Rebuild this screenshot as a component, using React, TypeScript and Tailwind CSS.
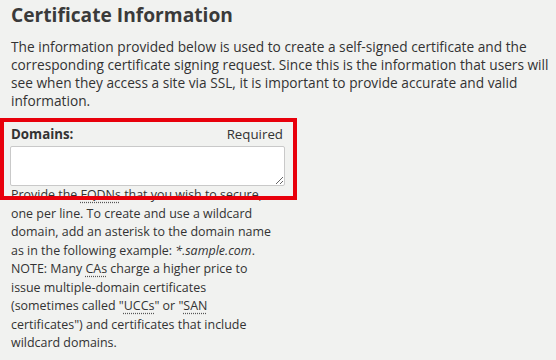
import React from "react";

// Certificate info step: domains field with help text, plus the red callout box
// that sits over the field in the screenshot.

function Abbr({ title, children }: { title: string; children: React.ReactNode }) {
  return (
    <abbr
      title={title}
      className="underline decoration-dotted decoration-[#555] underline-offset-[3px]"
    >
      {children}
    </abbr>
  );
}

export default function App() {
  return (
    <div className="relative h-[360px] w-[556px] overflow-hidden bg-[#f1f2f0] font-['Open_Sans',sans-serif] text-[#333]">
      <div className="pl-[11px] pt-[2px]">
        <h2 className="text-[19.2px] font-bold leading-[26px] text-[#3a3a3a]">
          Certificate Information
        </h2>
        <p className="mt-[10px] whitespace-nowrap text-[13.7px] leading-[18px]">
          The information provided below is used to create a self-signed certificate and the
          <br />
          corresponding certificate signing request. Since this is the information that users will
          <br />
          see when they access a site via SSL, it is important to provide accurate and valid
          <br />
          information.
        </p>

        <div className="mt-[15px] w-[274px]">
          <div className="flex justify-between pr-[2px] text-[13.3px] leading-[18px]">
            <span className="font-bold">Domains:</span>
            <span>Required</span>
          </div>
          <textarea className="-ml-px mt-[3px] block h-[40px] w-[275px] rounded-[2px] border border-[#c9c9c9] bg-white" />
          <p className="whitespace-nowrap text-[12.45px] leading-[18.5px]">
            Provide the <Abbr title="Fully Qualified Domain Names">FQDNs</Abbr> that you wish to secure,
            <br />
            one per line. To create and use a wildcard
            <br />
            domain, add an asterisk to the domain name
            <br />
            as in the following example: <i>*.sample.com</i>.
            <br />
            NOTE: Many <Abbr title="Certificate Authorities">CAs</Abbr> charge a higher price to
            <br />
            issue multiple-domain certificates
            <br />
            (sometimes called "<Abbr title="Unified Communications Certificates">UCCs</Abbr>" or "
            <Abbr title="Subject Alternative Name">SAN</Abbr>
            <br />
            certificates") and certificates that include
            <br />
            wildcard domains.
          </p>
        </div>
      </div>

      {/* callout drawn over the field */}
      <div className="pointer-events-none absolute left-0 top-[118px] h-[82px] w-[297px] border-4 border-[#e8000b]" />
    </div>
  );
}
